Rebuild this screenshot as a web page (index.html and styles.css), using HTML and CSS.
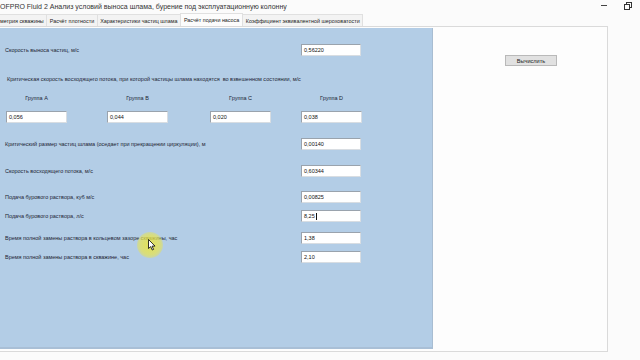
FILE: index.html
```html
<!DOCTYPE html>
<html lang="ru">
<head>
<meta charset="utf-8">
<link rel="stylesheet" href="styles.css">
</head>
<body>
<div class="window">
  <div class="titlebar">
    <span class="title">ОFPRO Fluid 2 Анализ условий выноса шлама, бурение под эксплуатационную колонну</span>
    <span class="controls">
      <span class="ctl min"></span>
      <span class="ctl restore"><span class="sq back"></span><span class="sq front"></span></span>
    </span>
  </div>
  <div class="tabs">
    <span class="tab first">метрия скважины</span>
    <span class="tab">Расчёт плотности</span>
    <span class="tab">Характеристики частиц шлама</span>
    <span class="tab active">Расчёт подачи насоса</span>
    <span class="tab">Коэффициент эквивалентной шероховатости</span>
  </div>
  <div class="panel">
    <div class="blue">
      <div class="row r1"><span class="label">Скорость выноса частиц, м/с</span><span class="field">0,56220</span></div>
      <div class="textline crit">Критическая скорость восходящего потока, при которой частицы шлама находятся&nbsp; во взвешенном состоянии, м/с</div>
      <div class="groups">
        <span class="g">Группа A</span><span class="g">Группа B</span><span class="g">Группа C</span><span class="g">Группа D</span>
      </div>
      <div class="groups inputs">
        <span class="field">0,056</span><span class="field">0,044</span><span class="field">0,020</span><span class="field">0,038</span>
      </div>
      <div class="row r2"><span class="label">Критический размер частиц шлама (оседает при прекращении циркуляции), м</span><span class="field">0,00140</span></div>
      <div class="row r3"><span class="label">Скорость восходящего потока, м/с</span><span class="field">0,60344</span></div>
      <div class="row r4"><span class="label">Подача бурового раствора, куб м/с</span><span class="field">0,00825</span></div>
      <div class="row r5"><span class="label">Подача бурового раствора, л/с</span><span class="field">8,25<span class="caret"></span></span></div>
      <div class="row r6"><span class="label">Время полной замены раствора в кольцевом зазоре скважины, час</span><span class="field">1,38</span></div>
      <div class="row r7"><span class="label">Время полной замены раствора в скважине, час</span><span class="field">2,10</span></div>
    </div>
    <div class="side">
      <span class="button">Вычислить</span>
    </div>
  </div>
</div>
<div class="highlight"></div>
<svg class="cursor" width="8" height="12" viewBox="0 0 8 12"><path d="M0.5 0.5 L0.5 9.5 L2.7 7.6 L4.3 11 L5.6 10.4 L4.1 7.1 L7 7.1 Z" fill="#fff" stroke="#000" stroke-width="0.8"/></svg>
</body>
</html>
```
FILE: styles.css
```css
html, body {
  margin: 0;
  padding: 0;
}
body {
  width: 640px;
  height: 360px;
  background: #fbfbfb;
  font-family: "Liberation Sans", Arial, sans-serif;
  color: #1a1a2a;
  overflow: hidden;
  position: relative;
}
.window {
  display: flex;
  flex-direction: column;
}
.titlebar {
  height: 13px;
  display: flex;
  align-items: center;
  justify-content: space-between;
}
.title {
  font-size: 7px;
  color: #333;
  margin-top: -1px;
}
.controls {
  display: flex;
  align-items: center;
  gap: 17px;
  margin-right: 9px;
}
.ctl.min {
  width: 6px;
  height: 1px;
  background: #444;
  margin-top: -3px;
}
.ctl.restore {
  position: relative;
  width: 7px;
  height: 7px;
  margin-top: -2px;
}
.sq {
  position: absolute;
  width: 4px;
  height: 4px;
  border: 1px solid #333;
}
.sq.back { left: 2px; top: 0; }
.sq.front { left: 0; top: 2px; background: #fbfbfb; }
.tabs {
  height: 13px;
  display: flex;
  align-items: flex-end;
  font-size: 5.4px;
  color: #222;
}
.tab {
  height: 11px;
  display: flex;
  align-items: center;
  padding: 0 2.5px;
  border: 1px solid #e0e0e0;
  border-bottom: none;
  background: #f3f3f3;
  margin-right: -1px;
  white-space: nowrap;
}
.tab.first {
  border-left: none;
  padding-left: 0;
}
.tab.active {
  background: #fcfcfc;
  height: 12px;
  padding: 0 3px;
}
.panel {
  width: 608px;
  height: 326px;
  border: 1px solid #dadada;
  border-left: none;
  background: #fdfdfd;
  display: flex;
  padding-top: 1px;
  box-sizing: border-box;
}
.blue {
  width: 433px;
  height: 321px;
  background: #b3cde6;
  border-bottom: 2px solid #a9bfd6;
  border-right: 1px solid #a8bdd2;
  box-sizing: border-box;
  display: flex;
  flex-direction: column;
  font-size: 5.5px;
  color: #1c2433;
}
.side {
  flex: 1;
  display: flex;
  justify-content: flex-end;
  align-items: flex-start;
  padding-top: 27px;
  padding-right: 50px;
}
.button {
  width: 52px;
  height: 11px;
  box-sizing: border-box;
  background: #e1e1e1;
  border: 1px solid #b9b9b9;
  font-size: 5.6px;
  color: #222;
  display: flex;
  align-items: center;
  justify-content: center;
}
.row {
  display: flex;
  align-items: center;
  height: 12px;
  padding-left: 5px;
}
.label {
  width: 296px;
  white-space: nowrap;
}
.field {
  width: 60px;
  height: 12px;
  box-sizing: border-box;
  background: #fff;
  border: 1px solid #9aa3ad;
  border-right-color: #d8dde2;
  border-bottom-color: #d8dde2;
  display: flex;
  align-items: center;
  padding-left: 2px;
  font-size: 5.5px;
  color: #111;
}
.caret {
  display: inline-block;
  width: 1px;
  height: 7px;
  background: #111;
  margin-left: 1px;
}
.r1 { margin-top: 16px; }
.crit {
  margin-top: 19px;
  height: 8px;
  line-height: 8px;
  padding-left: 7px;
  white-space: nowrap;
}
.groups {
  display: grid;
  grid-template-columns: 101px 103px 91px 61px;
  padding-left: 6px;
  margin-top: 11px;
  height: 8px;
  line-height: 8px;
}
.g {
  width: 61px;
  text-align: center;
}
.groups.inputs {
  margin-top: 9px;
  height: 12px;
}
.groups.inputs .field { width: 61px; }
.r2 { margin-top: 15px; }
.r3 { margin-top: 15px; }
.r4 { margin-top: 14px; }
.r5 { margin-top: 7px; }
.r6 { margin-top: 10px; }
.r7 { margin-top: 7px; }
.highlight {
  position: absolute;
  left: 137px;
  top: 232px;
  width: 26px;
  height: 26px;
  border-radius: 50%;
  background: radial-gradient(circle, rgba(236,230,60,0.85) 0%, rgba(232,228,80,0.7) 55%, rgba(220,220,110,0.25) 80%, rgba(200,210,160,0) 100%);
}
.cursor {
  position: absolute;
  left: 148px;
  top: 239px;
}
```
